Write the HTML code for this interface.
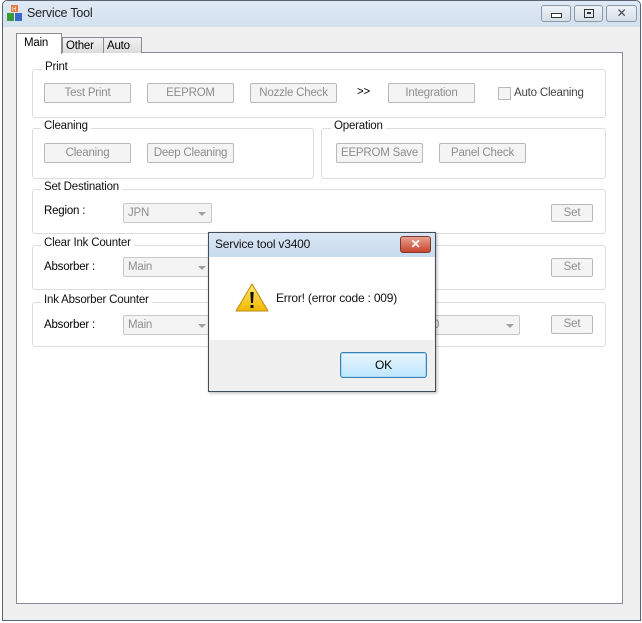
<!DOCTYPE html>
<html><head><meta charset="utf-8"><style>
*{box-sizing:border-box;margin:0;padding:0}
body{width:642px;height:623px;background:#fff;position:relative;overflow:hidden;font-family:"Liberation Sans","Noto Sans CJK JP",sans-serif;font-size:11.5px;color:#000;letter-spacing:-0.2px}
.a{position:absolute}
.win{left:2px;top:0;width:639px;height:621px;background:#f0f0f0;border:1px solid #5a6470;border-radius:5px 5px 0 0}
.title{left:3px;top:1px;width:637px;height:26px;background:linear-gradient(#dfe9f5,#d3e0ee);border-radius:5px 5px 0 0}
.cb{top:5px;height:17px;border:1px solid #8b98a8;border-radius:3px;background:linear-gradient(#eef2f7,#d6dfe9)}
.panel{left:16px;top:52px;width:607px;height:552px;background:#fff;border:1px solid #898c95}
.tab{top:37px;height:16px;border:1px solid #898c95;border-bottom:none;background:linear-gradient(#f2f2f2,#dcdcdc);padding:1px 0 0 3px;font-size:11.5px;line-height:14px}
.grp{border:1px solid #dcdcdc;border-radius:3px}
.gl{background:#fff;padding:0 3px;color:#111}
.btn{height:20px;border:1px solid #b8b8b8;border-radius:2px;background:#f4f4f4;color:#8d8d8d;text-align:center;line-height:18px}
.cmb{height:20px;border:1px solid #c8c8c8;border-radius:2px;background:#f4f4f4;color:#8d8d8d;padding-left:4px;line-height:18px}
.cmb:after{content:"";position:absolute;right:5px;top:8px;border:4px solid transparent;border-top:4px solid #a0a0a0;border-bottom:none}
</style></head><body>
<div class="a win"></div>
<div class="a title"></div>
<svg class="a" style="left:7px;top:5px" width="16" height="17" viewBox="0 0 16 17"><rect x="4" y="0" width="7" height="7" fill="#e87a3a"/><rect x="0" y="8" width="7" height="8" fill="#3a9a3a"/><rect x="8" y="8" width="7" height="8" fill="#3a6ac8"/><text x="5" y="6" font-size="6" fill="#fff">H</text></svg>
<div class="a" style="left:27px;top:6px;font-size:12.5px;color:#222">Service Tool</div>
<div class="a cb" style="left:541px;width:30px"><div class="a" style="left:9px;top:7px;width:11px;height:5px;border:1px solid #333;background:#fff"></div></div>
<div class="a cb" style="left:574px;width:29px"><div class="a" style="left:9px;top:3px;width:10px;height:9px;border:1px solid #333"></div><div class="a" style="left:12px;top:6px;width:4px;height:2px;background:#333"></div></div>
<div class="a cb" style="left:606px;width:31px;color:#444;text-align:center;line-height:15px;font-size:12px">✕</div>

<div class="a panel"></div>
<div class="a tab" style="left:62px;width:42px">Other</div>
<div class="a tab" style="left:103px;width:39px">Auto</div>
<div class="a" style="left:16px;top:33px;width:46px;height:21px;background:#fff;border:1px solid #898c95;border-bottom:none;padding:3px 0 0 7px">Main</div>

<div class="a grp" style="left:32px;top:69px;width:574px;height:49px"></div>
<div class="a gl" style="left:42px;top:61px">Print</div>
<div class="a btn" style="left:44px;top:83px;width:87px">Test Print</div>
<div class="a btn" style="left:147px;top:83px;width:87px">EEPROM</div>
<div class="a btn" style="left:250px;top:83px;width:87px">Nozzle Check</div>
<div class="a" style="left:357px;top:86px">&gt;&gt;</div>
<div class="a btn" style="left:388px;top:83px;width:87px">Integration</div>
<div class="a" style="left:498px;top:87px;width:13px;height:13px;border:1px solid #b8b8b8;background:#f4f4f4"></div>
<div class="a" style="left:514px;top:87px;color:#444">Auto Cleaning</div>

<div class="a grp" style="left:32px;top:128px;width:282px;height:51px"></div>
<div class="a gl" style="left:41px;top:120px">Cleaning</div>
<div class="a btn" style="left:44px;top:143px;width:87px">Cleaning</div>
<div class="a btn" style="left:147px;top:143px;width:87px">Deep Cleaning</div>
<div class="a grp" style="left:321px;top:128px;width:285px;height:51px"></div>
<div class="a gl" style="left:331px;top:120px">Operation</div>
<div class="a btn" style="left:336px;top:143px;width:87px">EEPROM Save</div>
<div class="a btn" style="left:439px;top:143px;width:87px">Panel Check</div>

<div class="a grp" style="left:32px;top:189px;width:574px;height:45px"></div>
<div class="a gl" style="left:41px;top:181px">Set Destination</div>
<div class="a" style="left:44px;top:205px">Region :</div>
<div class="a cmb" style="left:123px;top:203px;width:89px">JPN</div>
<div class="a btn" style="left:551px;top:204px;width:42px;height:18px;line-height:16px">Set</div>

<div class="a grp" style="left:32px;top:245px;width:574px;height:45px"></div>
<div class="a gl" style="left:41px;top:237px">Clear Ink Counter</div>
<div class="a" style="left:44px;top:261px">Absorber :</div>
<div class="a cmb" style="left:123px;top:257px;width:89px">Main</div>
<div class="a btn" style="left:551px;top:258px;width:42px;height:19px;line-height:17px">Set</div>

<div class="a grp" style="left:32px;top:302px;width:574px;height:45px"></div>
<div class="a gl" style="left:41px;top:294px">Ink Absorber Counter</div>
<div class="a" style="left:44px;top:319px">Absorber :</div>
<div class="a cmb" style="left:123px;top:315px;width:89px">Main</div>
<div class="a cmb" style="left:400px;top:315px;width:120px;padding-left:32px">0</div>
<div class="a btn" style="left:551px;top:315px;width:42px;height:19px;line-height:17px">Set</div>

<!-- dialog -->
<div class="a" style="left:208px;top:232px;width:228px;height:160px;border:1px solid #444c58;background:#f0f0f0;box-shadow:1px 1px 3px rgba(0,0,0,.3)"></div>
<div class="a" style="left:209px;top:233px;width:226px;height:24px;background:linear-gradient(#d9e6f4,#c9dbef)"></div>
<div class="a" style="left:215px;top:237px;color:#111;font-size:12px">Service tool v3400</div>
<div class="a" style="left:400px;top:236px;width:31px;height:17px;border:1px solid #7a3a30;border-radius:3px;background:linear-gradient(#e8a090,#c8452f);color:#fff;text-align:center;font-weight:bold;line-height:15px;font-size:12px">✕</div>
<div class="a" style="left:210px;top:257px;width:224px;height:83px;background:#fff"></div>
<svg class="a" style="left:235px;top:283px" width="34" height="30" viewBox="0 0 34 30"><defs><linearGradient id="g" x1="0" y1="0" x2="0" y2="1"><stop offset="0" stop-color="#ffe870"/><stop offset="1" stop-color="#f0b800"/></linearGradient></defs><path d="M17 1 L33 28 L1 28 Z" fill="url(#g)" stroke="#b88a10" stroke-linejoin="round"/><path d="M15.3 9 H18.7 L18 20 H16 Z" fill="#111"/><rect x="15.5" y="22" width="3" height="3" fill="#111"/></svg>
<div class="a" style="left:276px;top:291px;color:#111;font-size:12px">Error! (error code : 009)</div>
<div class="a" style="left:340px;top:352px;width:87px;height:26px;border:1px solid #3c7fb1;border-radius:3px;background:linear-gradient(#eaf6fd,#bee6fd);box-shadow:inset 0 0 0 1px #a8dcf8;text-align:center;line-height:24px;font-size:12px">OK</div>
</body></html>
